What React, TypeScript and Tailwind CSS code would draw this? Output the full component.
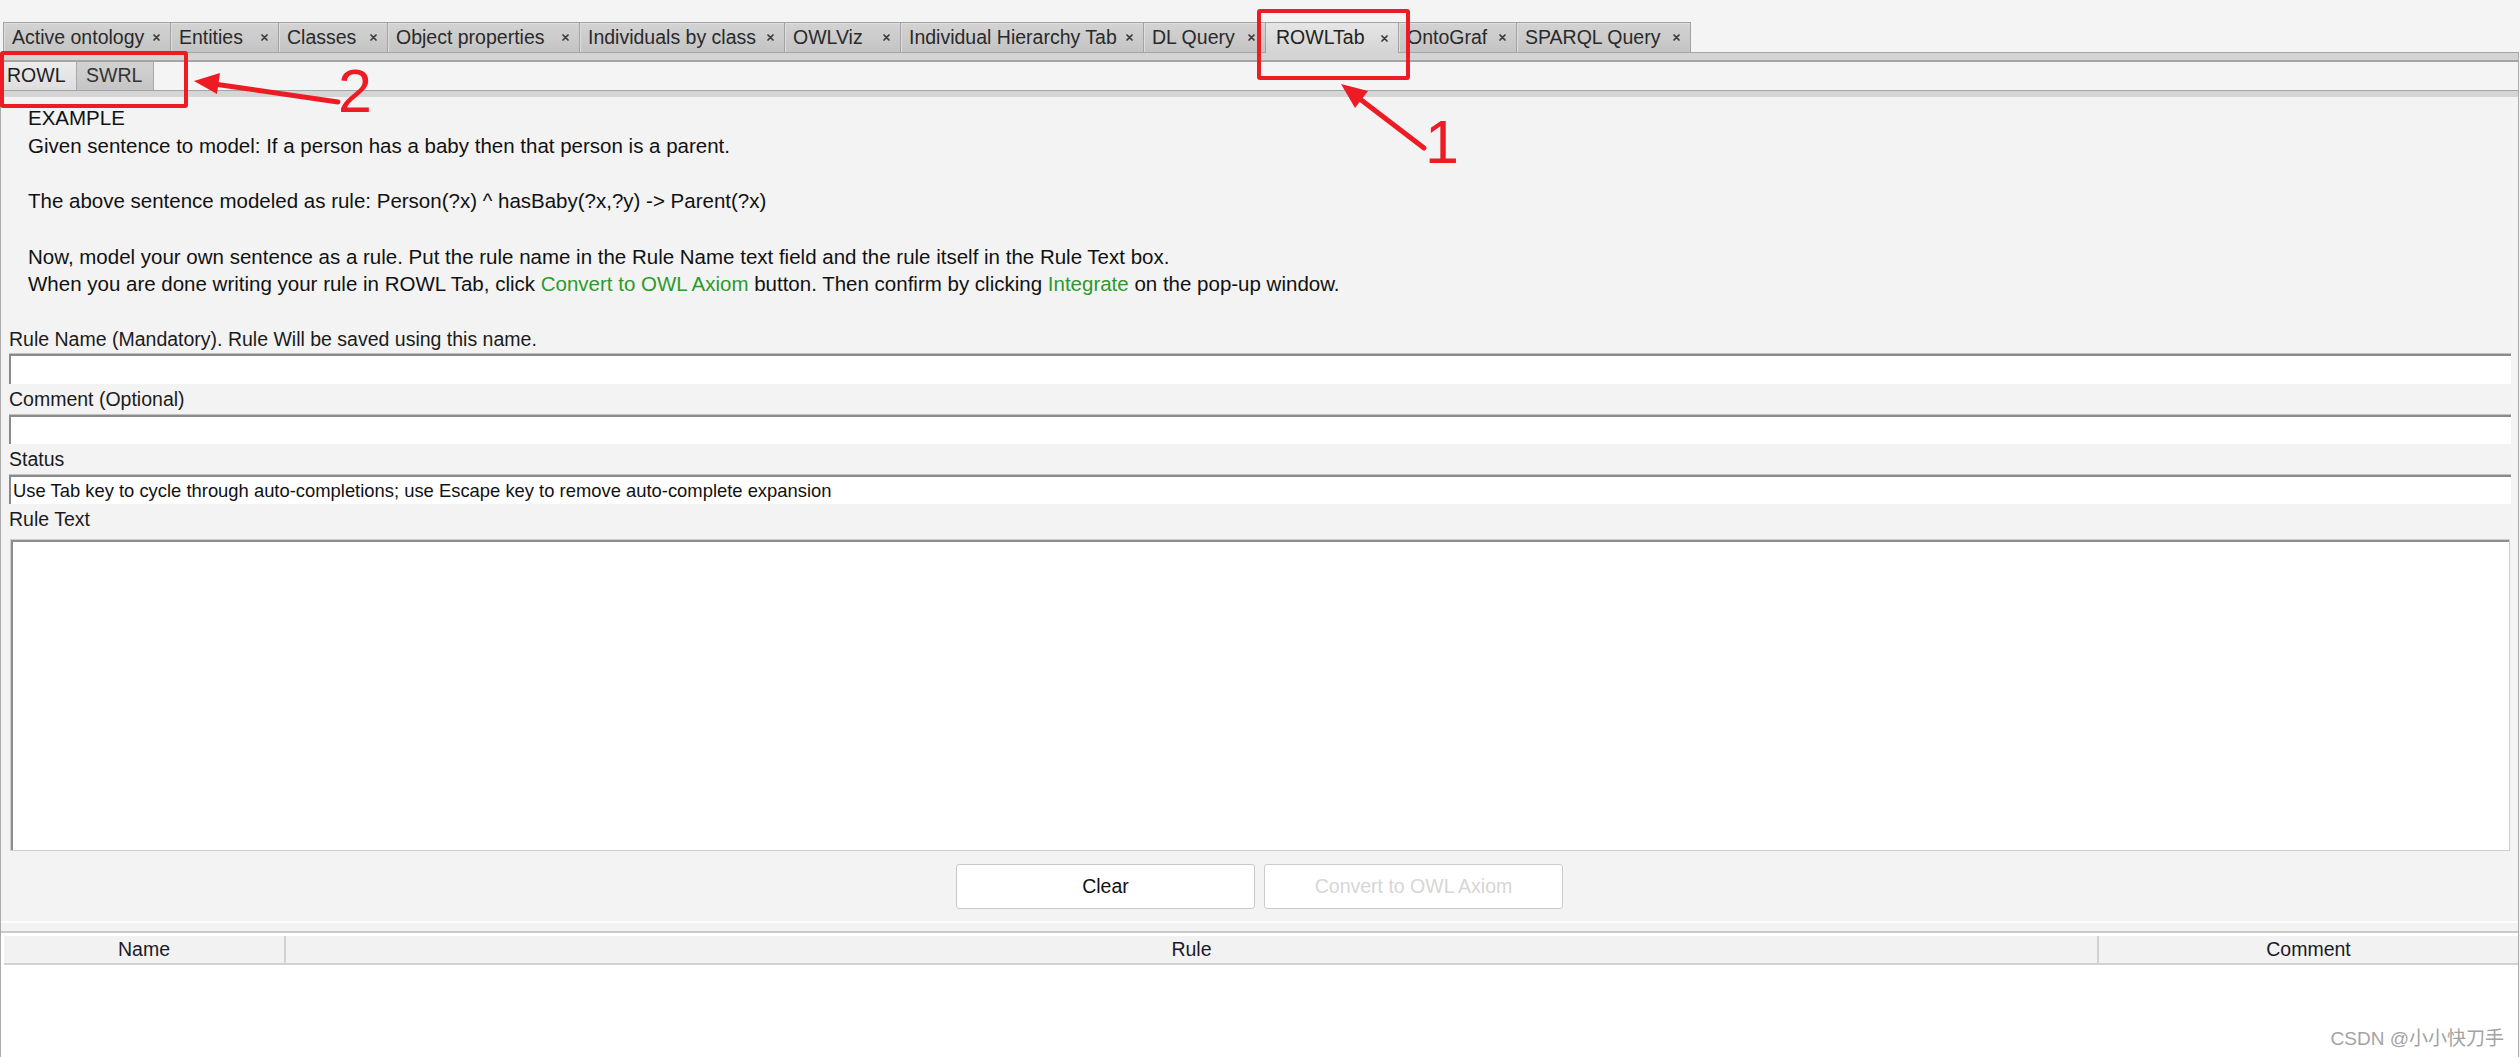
import React from "react";

type Tab = { label: string; w: string; active?: boolean };

const tabs: Tab[] = [
  { label: "Active ontology", w: "w-[168px]" },
  { label: "Entities", w: "w-[108px]" },
  { label: "Classes", w: "w-[109px]" },
  { label: "Object properties", w: "w-[192px]" },
  { label: "Individuals by class", w: "w-[205px]" },
  { label: "OWLViz", w: "w-[116px]" },
  { label: "Individual Hierarchy Tab", w: "w-[243px]" },
  { label: "DL Query", w: "w-[122px]" },
  { label: "ROWLTab", w: "w-[133px]", active: true },
  { label: "OntoGraf", w: "w-[118px]" },
  { label: "SPARQL Query", w: "w-[174px]" },
];

function CloseX() {
  return (
    <svg width="7" height="7" viewBox="0 0 7 7" className="shrink-0">
      <path d="M1 1L6 6M6 1L1 6" stroke="#3a3a3a" strokeWidth="1.7" strokeLinecap="round" />
    </svg>
  );
}

function Field({ children }: { children?: React.ReactNode }) {
  return (
    <div className="h-full bg-white border-t-2 border-l-2 border-[#8a8a8a] shadow-[0_-1px_0_#c2c2c2]">
      {children}
    </div>
  );
}

export default function App() {
  return (
    <div className="relative w-[2520px] h-[1057px] overflow-hidden flex flex-col bg-[#f4f4f4] text-[#1b1b1b] font-['Liberation_Sans',Arial,sans-serif] text-[19.5px]">
      {/* top spacing */}
      <div className="h-[22px] shrink-0" />

      {/* main tab row */}
      <div className="h-[30px] shrink-0 flex items-start pl-[3px]">
        {tabs.map((t) =>
          t.active ? (
            <div
              key={t.label}
              className={`${t.w} h-[31px] relative z-10 flex items-center pl-[10px] pr-[10px] border-t border-r border-[#a2a2a2] bg-linear-to-b from-[#e6e6e6] to-[#d4d4d4] text-[#222]`}
            >
              <span className="flex-1 whitespace-nowrap">{t.label}</span>
              <CloseX />
            </div>
          ) : (
            <div
              key={t.label}
              className={`${t.w} h-[30px] flex items-center pl-[8px] pr-[10px] border-t border-r first:border-l border-[#a2a2a2] bg-linear-to-b from-[#d3d3d3] to-[#c4c4c4] text-[#2a2a2a] shadow-[inset_1px_1px_0_#dedede]`}
            >
              <span className="flex-1 whitespace-nowrap">{t.label}</span>
              <CloseX />
            </div>
          )
        )}
      </div>

      {/* body with side borders */}
      <div className="flex-1 flex flex-col w-[2519px] border-x border-[#ababab]">
        {/* main tab content border band */}
        <div className="h-[10px] shrink-0 border-t border-b-2 border-[#a4a4a4] bg-[#d4d4d4]" />

        {/* sub tabs */}
        <div className="h-[28px] shrink-0 flex items-stretch pl-[2px]">
          <div className="w-[74px] flex items-center pl-[4px] bg-linear-to-b from-[#ececec] to-[#dedede] border-r border-[#a8a8a8] text-[#1e1e1e]">
            ROWL
          </div>
          <div className="w-[77px] flex items-center pl-[9px] bg-linear-to-b from-[#d2d2d2] to-[#c5c5c5] border-r border-[#a8a8a8] text-[#333]">
            SWRL
          </div>
        </div>
        <div className="h-[7px] shrink-0 border-t border-[#a4a4a4] bg-[#d5d5d5]" />

        {/* content panel */}
        <div className="flex-1 flex flex-col bg-[#f3f3f3]">
          <div className="pl-[27px] pt-[7px] text-[20.5px] leading-[27.7px] text-[#111]">
            <div>EXAMPLE</div>
            <div>Given sentence to model: If a person has a baby then that person is a parent.</div>
            <div>&nbsp;</div>
            <div>The above sentence modeled as rule: Person(?x) ^ hasBaby(?x,?y) -&gt; Parent(?x)</div>
            <div>&nbsp;</div>
            <div>
              Now, model your own sentence as a rule. Put the rule name in the Rule Name text field and the rule itself in the Rule Text box.
            </div>
            <div>
              When you are done writing your rule in ROWL Tab, click{" "}
              <span className="text-[#2b9a2b]">Convert to OWL Axiom</span> button. Then confirm by clicking{" "}
              <span className="text-[#2b9a2b]">Integrate</span> on the pop-up window.
            </div>
          </div>

          <div className="mt-[27px] pl-[8px] pr-[7px] flex flex-col">
            <div className="h-[29px] leading-[29px]">Rule Name (Mandatory). Rule Will be saved using this name.</div>
            <div className="h-[30px]">
              <Field />
            </div>
            <div className="h-[31px] leading-[31px]">Comment (Optional)</div>
            <div className="h-[29px]">
              <Field />
            </div>
            <div className="h-[31px] leading-[31px]">Status</div>
            <div className="h-[29px]">
              <Field>
                <div className="h-full flex items-center pl-[2px] text-[18.4px] text-[#111]">
                  Use Tab key to cycle through auto-completions; use Escape key to remove auto-complete expansion
                </div>
              </Field>
            </div>
            <div className="h-[31px] leading-[31px] mb-[4px]">Rule Text</div>
            <div className="h-[312px] mx-[1px] border border-[#cfcfcf] bg-white">
              <div className="h-full border-t-2 border-l-2 border-[#8d8d8d] bg-white" />
            </div>
          </div>

          {/* buttons */}
          <div className="mt-[13px] h-[45px] shrink-0 flex justify-center gap-[9px]">
            <div className="w-[299px] h-[45px] flex items-center justify-center bg-white border border-[#c8c8c8] rounded-[3px] text-[#111]">
              Clear
            </div>
            <div className="w-[299px] h-[45px] flex items-center justify-center bg-white border border-[#cccccc] rounded-[3px] text-[#d6d6d6]">
              Convert to OWL Axiom
            </div>
          </div>

          <div className="h-[12px] shrink-0" />
          <div className="h-[2px] shrink-0 bg-[#fcfcfc]" />
          <div className="h-[8px] shrink-0" />
          <div className="h-[2px] shrink-0 bg-[#c9c9c9]" />

          {/* table */}
          <div className="flex-1 flex flex-col bg-white pt-[3px] pl-[3px]">
            <div className="h-[29px] shrink-0 flex bg-[#f2f2f2] border-b-2 border-[#d2d2d2] text-[#1a1a28]">
              <div className="w-[282px] flex items-center justify-center border-r-2 border-[#d2d2d2]">Name</div>
              <div className="flex-1 flex items-center justify-center border-r-2 border-[#d2d2d2]">Rule</div>
              <div className="w-[419px] flex items-center justify-center">Comment</div>
            </div>
            <div className="flex-1 bg-white" />
          </div>
        </div>
      </div>

      {/* annotations */}
      <div className="absolute left-[1257px] top-[9px] w-[153px] h-[71px] border-4 border-[#ed1c24] rounded-[3px] pointer-events-none" />
      <div className="absolute left-0 top-[51px] w-[188px] h-[57px] border-4 border-[#ed1c24] rounded-[3px] pointer-events-none" />
      <svg className="absolute left-0 top-0 pointer-events-none" width="2520" height="1057" viewBox="0 0 2520 1057">
        <line x1="1424" y1="148" x2="1356" y2="96" stroke="#ed1c24" strokeWidth="5" strokeLinecap="round" />
        <polygon points="1341,84 1368,91 1355,108" fill="#ed1c24" />
        <line x1="338" y1="102" x2="214" y2="84" stroke="#ed1c24" strokeWidth="5" strokeLinecap="round" />
        <polygon points="194,81 220,73 217,94" fill="#ed1c24" />
      </svg>
      <div className="absolute left-[1425px] top-[112px] text-[61px] leading-none text-[#ed1c24] font-['Liberation_Sans',Arial,sans-serif] pointer-events-none">
        1
      </div>
      <div className="absolute left-[338px] top-[61px] text-[61px] leading-none text-[#ed1c24] font-['Liberation_Sans',Arial,sans-serif] pointer-events-none">
        2
      </div>

      {/* watermark */}
      <div className="absolute right-[16px] top-[1027px] text-[19px] leading-[23px] text-[#a3a3a3] font-['Liberation_Sans','Noto_Sans_CJK_SC',sans-serif] pointer-events-none">
        CSDN @小小快刀手
      </div>
    </div>
  );
}
